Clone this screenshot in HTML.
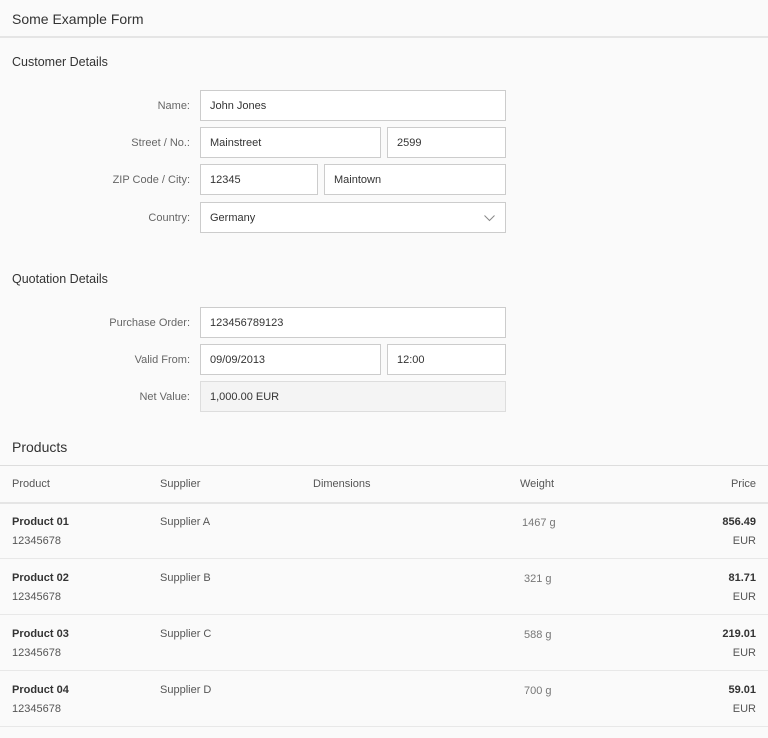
<!DOCTYPE html><html><head><style>
body{margin:0;width:768px;height:738px;background:#fafafa;font-family:"Liberation Sans",sans-serif;position:relative;overflow:hidden;color:#333}
.a{position:absolute;white-space:nowrap}
.t{font-size:14px;color:#333}
.h{font-size:12.5px;color:#333}
.l{font-size:11px;color:#666;text-align:right;width:180px;left:10px}
.i{position:absolute;box-sizing:border-box;border:1px solid #ccc;background:#fff;height:31px;font-size:11px;line-height:31px;padding-left:9px;color:#333}
.line{position:absolute;left:0;width:768px;height:1px;background:#ddd}
.c{font-size:11px;color:#555}
.b{font-weight:bold;color:#333;font-size:11px}
.g{font-size:11px;color:#777}
</style></head><body>
<div class="a t" style="left:12px;top:11px">Some Example Form</div>
<div class="line" style="top:36px;height:2px;background:#e5e5e5"></div>
<div class="a h" style="left:12px;top:55px">Customer Details</div>
<div class="a l" style="top:100px">Name:</div>
<div class="i" style="left:200px;top:90px;width:306px">John Jones</div>
<div class="a l" style="top:137px">Street / No.:</div>
<div class="i" style="left:200px;top:127px;width:181px">Mainstreet</div>
<div class="i" style="left:387px;top:127px;width:119px">2599</div>
<div class="a l" style="top:174px">ZIP Code / City:</div>
<div class="i" style="left:200px;top:164px;width:118px">12345</div>
<div class="i" style="left:324px;top:164px;width:182px">Maintown</div>
<div class="a l" style="top:212px">Country:</div>
<div class="i" style="left:200px;top:202px;width:306px">Germany<svg style="position:absolute;right:10px;top:12px" width="11" height="7"><path d="M0.5 0.5L5.5 5.5L10.5 0.5" fill="none" stroke="#888" stroke-width="1"/></svg></div>
<div class="a h" style="left:12px;top:272px">Quotation Details</div>
<div class="a l" style="top:317px">Purchase Order:</div>
<div class="i" style="left:200px;top:307px;width:306px">123456789123</div>
<div class="a l" style="top:354px">Valid From:</div>
<div class="i" style="left:200px;top:344px;width:181px">09/09/2013</div>
<div class="i" style="left:387px;top:344px;width:119px">12:00</div>
<div class="a l" style="top:391px">Net Value:</div>
<div class="i" style="left:200px;top:381px;width:306px;background:#f4f4f4;border-color:#ddd">1,000.00 EUR</div>
<div class="a t" style="left:12px;top:439px">Products</div>
<div class="line" style="top:465px"></div>
<div class="a c" style="left:12px;top:478px">Product</div>
<div class="a c" style="left:160px;top:478px">Supplier</div>
<div class="a c" style="left:313px;top:478px">Dimensions</div>
<div class="a c" style="left:520px;top:478px">Weight</div>
<div class="a c" style="right:12px;top:478px">Price</div>
<div class="line" style="top:502px;height:2px;background:#e5e5e5"></div>
<div class="a b" style="left:12px;top:516px">Product 01</div><div class="a c" style="left:12px;top:535px">12345678</div><div class="a c" style="left:160px;top:516px">Supplier A</div><div class="a g" style="left:522px;top:517px">1467 g</div><div class="a b" style="right:12px;top:516px">856.49</div><div class="a c" style="right:12px;top:535px">EUR</div>
<div class="line" style="top:558px;background:#e8e8e8"></div>
<div class="a b" style="left:12px;top:572px">Product 02</div><div class="a c" style="left:12px;top:591px">12345678</div><div class="a c" style="left:160px;top:572px">Supplier B</div><div class="a g" style="left:524px;top:573px">321 g</div><div class="a b" style="right:12px;top:572px">81.71</div><div class="a c" style="right:12px;top:591px">EUR</div>
<div class="line" style="top:614px;background:#e8e8e8"></div>
<div class="a b" style="left:12px;top:628px">Product 03</div><div class="a c" style="left:12px;top:647px">12345678</div><div class="a c" style="left:160px;top:628px">Supplier C</div><div class="a g" style="left:524px;top:629px">588 g</div><div class="a b" style="right:12px;top:628px">219.01</div><div class="a c" style="right:12px;top:647px">EUR</div>
<div class="line" style="top:670px;background:#e8e8e8"></div>
<div class="a b" style="left:12px;top:684px">Product 04</div><div class="a c" style="left:12px;top:703px">12345678</div><div class="a c" style="left:160px;top:684px">Supplier D</div><div class="a g" style="left:524px;top:685px">700 g</div><div class="a b" style="right:12px;top:684px">59.01</div><div class="a c" style="right:12px;top:703px">EUR</div>
<div class="line" style="top:726px;background:#e8e8e8"></div>
</body></html>
